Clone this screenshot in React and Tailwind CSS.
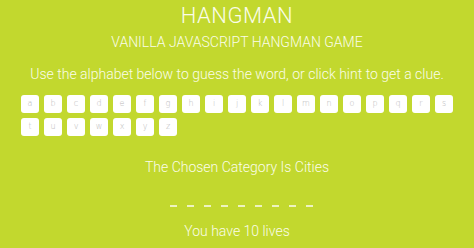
import React from 'react'

const letters = 'abcdefghijklmnopqrstuvwxyz'.split('')

const App = () => {
  return (
    <div className="w-[474px] h-[248px] bg-[#c2d82e] text-[#fbfde9] font-['Roboto',sans-serif] font-light flex flex-col items-center overflow-hidden">
      <h1 className="text-[22px] leading-none mt-[5px] tracking-[0.5px]">HANGMAN</h1>
      <h2 className="text-[14px] leading-none mt-[8px]">VANILLA JAVASCRIPT HANGMAN GAME</h2>
      <p className="text-[14px] leading-none mt-[18px]">Use the alphabet below to guess the word, or click hint to get a clue.</p>

      <ul className="flex flex-wrap gap-[5px] w-[436px] mt-[14px] ml-[4px]">
        {letters.map(l => (
          <li key={l} className="w-[18px] h-[18px] bg-white rounded-[3px] flex items-center justify-center text-[8px] text-[#b9b9b9] font-['DejaVu_Sans',sans-serif]">
            {l}
          </li>
        ))}
      </ul>

      <p className="text-[14px] leading-none mt-[24px]">The Chosen Category Is Cities</p>

      <div className="flex gap-[10px] mt-[31px] ml-[9px]">
        {Array.from({ length: 9 }).map((_, i) => (
          <span key={i} className="w-[7px] h-[2px] bg-white/70" />
        ))}
      </div>

      <p className="text-[14px] leading-none mt-[17px]">You have 10 lives</p>
    </div>
  )
}

export default App
